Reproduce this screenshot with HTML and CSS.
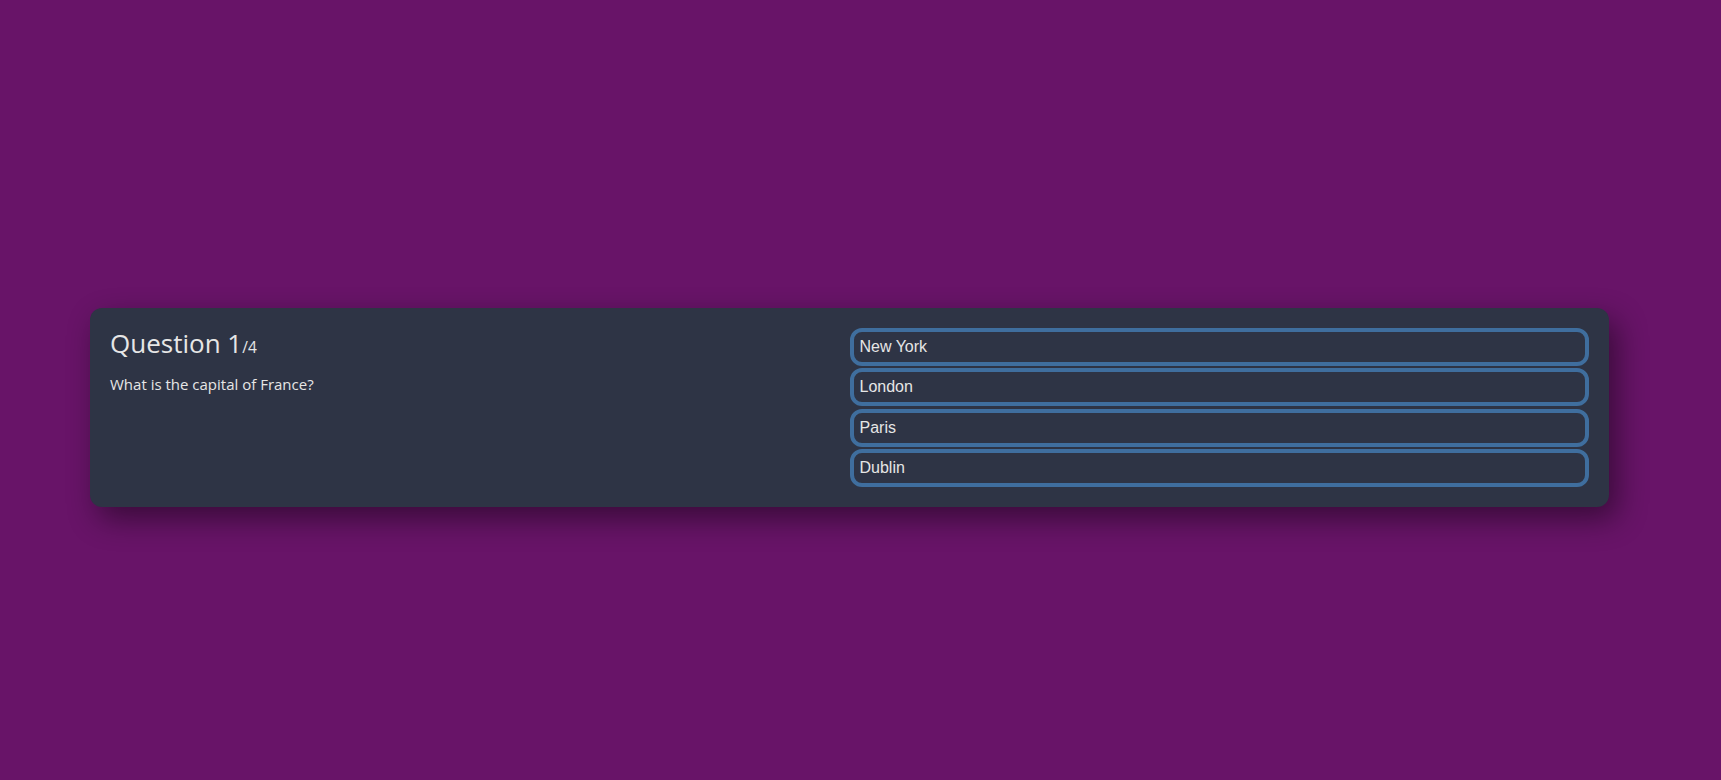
FILE: index.html
```html
<!DOCTYPE html>
<html lang="en">
<head>
    <meta charset="UTF-8">
    <meta name="viewport" content="width=device-width, initial-scale=1.0">
    <title>Quiz</title>
    <link rel="stylesheet" href="styles.css">
</head>
<body>

    <div class="app">
        <div class="question-section">
            <div class="question-count">
                <span class="count-big">Question 1</span><span class="count-small">/4</span>
            </div>
            <div class="question-text">What is the capital of France?</div>
        </div>

        <div class="answer-section">
            <button class="answer">New York</button>
            <button class="answer">London</button>
            <button class="answer">Paris</button>
            <button class="answer">Dublin</button>
        </div>
    </div>

</body>
</html>
```

FILE: styles.css
```css
body {
    margin: 0;
    background-color: #681468;
    font-family: "Open Sans", "Noto Sans", sans-serif;
    color: #e6e6e6;
    padding: 308px 112px 0 90px;
    min-height: 100vh;
    box-sizing: border-box;
}
.app {
    display: grid;
    grid-template-columns: 1fr 1fr;
    background-color: #2e3445;
    border-radius: 12px;
    padding: 20px;
    box-shadow: 8px 12px 30px rgba(0, 0, 0, 0.45);
}
.question-count {
    font-size: 26px;
    line-height: 30px;
    margin-bottom: 12px;
}
.count-small {
    font-size: 15.5px;
}
.question-text {
    font-size: 15px;
}
.answer-section {
    display: flex;
    flex-direction: column;
    gap: 2.3px;
}
.answer {
    height: 38px;
    box-sizing: border-box;
    display: block;
    width: 100%;
    text-align: left;
    font-family: "Liberation Sans", Arial, sans-serif;
    font-size: 16px;
    color: #e6e6e6;
    background-color: #2e3445;
    border: 4px solid #3f6e9e;
    border-radius: 12px;
    padding: 0 6px;
    cursor: pointer;
}
```
